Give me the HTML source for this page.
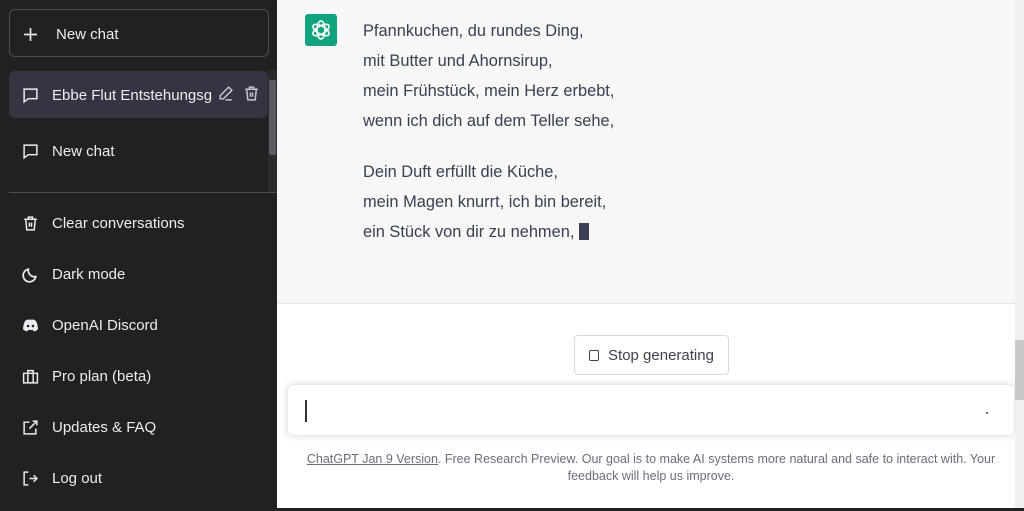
<!DOCTYPE html>
<html><head><meta charset="utf-8"><style>
*{box-sizing:border-box;margin:0;padding:0}
body{width:1024px;height:511px;overflow:hidden;font-family:"Liberation Sans",sans-serif;background:#fff;position:relative}
.side{position:absolute;left:0;top:0;width:277px;height:511px;background:#202123;color:#ececf1;font-size:15px}
.nc{position:absolute;left:9px;top:9px;width:260px;height:48px;border:1px solid #4d4d4f;border-radius:6px}
.row{position:absolute;left:22px;display:flex;align-items:center;gap:13px;height:24px}
.row svg{width:17px;height:17px;flex:none}
.sel{position:absolute;left:9px;top:71px;width:259px;height:47px;background:#343541;border-radius:6px}
.main{position:absolute;left:277px;top:0;width:738px;height:511px}
.gray{position:absolute;left:0;top:0;width:738px;height:304px;background:#f7f7f8;border-bottom:1px solid #e5e5e5}
.poem{position:absolute;left:86px;top:16px;color:#374151;font-size:16.4px;line-height:30px}
.logo{position:absolute;left:28px;top:14px;width:32px;height:32px;background:#10a37f;border-radius:3px}
.stop{position:absolute;left:297px;top:335px;width:155px;height:40px;border:1px solid #d9d9e3;border-radius:4px;background:#fff;font-size:15px;color:#40414f;display:flex;align-items:center;justify-content:center;gap:9px}
.inp{position:absolute;left:10px;top:384px;width:728px;height:52px;background:#fff;border-radius:6px;box-shadow:0 0 8px rgba(0,0,0,.12);border:1px solid #e8e8e8}
.foot{position:absolute;left:20px;top:451px;width:708px;text-align:center;font-size:12.5px;color:#6b6c7b;line-height:17px}
</style></head><body>
<div class="side">
 <div class="nc"></div>
 <div class="row" style="top:22px"><svg viewBox="0 0 16 16" stroke="#ececf1" stroke-width="1.6" fill="none"><path d="M8 2v12M2 8h12"/></svg><span style="margin-left:4px">New chat</span></div>
 <div class="sel"></div>
 <div class="row" style="top:83px"><svg viewBox="0 0 16 16" stroke="#ececf1" stroke-width="1.4" fill="none"><path d="M2 2h12v9H6l-4 3z"/></svg><span>Ebbe Flut Entstehungsg</span></div>
 <svg style="position:absolute;left:217px;top:85px" width="17" height="17" viewBox="0 0 16 16" stroke="#c5c5d2" stroke-width="1.4" fill="none"><path d="M11 2l3 3-8 8H3v-3zM8 14h6"/></svg>
 <svg style="position:absolute;left:243px;top:85px" width="17" height="17" viewBox="0 0 16 16" stroke="#c5c5d2" stroke-width="1.4" fill="none"><path d="M2 4h12M6 4V2h4v2M3.5 4l1 10h7l1-10M7 7v4M9 7v4"/></svg>
 <div style="position:absolute;left:268px;top:70px;width:9px;height:122px;background:#2a2b2e"></div>
 <div style="position:absolute;left:269px;top:80px;width:7px;height:75px;background:#5a5b60;border-radius:2px"></div>
 <div class="row" style="top:139px"><svg viewBox="0 0 16 16" stroke="#ececf1" stroke-width="1.4" fill="none"><path d="M2 2h12v9H6l-4 3z"/></svg><span>New chat</span></div>
 <div style="position:absolute;left:9px;top:192px;width:268px;height:1px;background:#4d4d4f"></div>
 <div class="row" style="top:211px"><svg viewBox="0 0 16 16" stroke="#ececf1" stroke-width="1.4" fill="none"><path d="M2 4h12M6 4V2h4v2M3.5 4l1 10h7l1-10M7 7v4M9 7v4"/></svg><span>Clear conversations</span></div>
 <div class="row" style="top:262px"><svg viewBox="0 0 16 16" stroke="#ececf1" stroke-width="1.6" fill="none"><path d="M13 10A6 6 0 0 1 6 3a6 6 0 1 0 7 7z"/></svg><span>Dark mode</span></div>
 <div class="row" style="top:313px"><svg viewBox="0 0 16 16" fill="#ececf1"><path d="M3 3.5Q5.5 2 7 2.5h2Q10.5 2 13 3.5q2 3.5 2 8Q13 13.5 11 13.5l-1-1.5Q8 12.5 6 12l-1 1.5Q3 13.5 1 11.5q0-4.5 2-8z"/><circle cx="5.7" cy="8.5" r="1.2" fill="#202123"/><circle cx="10.3" cy="8.5" r="1.2" fill="#202123"/></svg><span>OpenAI Discord</span></div>
 <div class="row" style="top:364px"><svg viewBox="0 0 16 16" stroke="#ececf1" stroke-width="1.4" fill="none"><path d="M1.5 5h13v9h-13zM5.5 5V2.5h5V5M5.5 5v9M10.5 5v9"/></svg><span>Pro plan (beta)</span></div>
 <div class="row" style="top:415px"><svg viewBox="0 0 16 16" stroke="#ececf1" stroke-width="1.4" fill="none"><path d="M7 3H2v11h11V9M10 2h4v4M14 2L7 9"/></svg><span>Updates &amp; FAQ</span></div>
 <div class="row" style="top:466px"><svg viewBox="0 0 16 16" stroke="#ececf1" stroke-width="1.4" fill="none"><path d="M6 2H2v12h4M7 8h7M11 5l3 3-3 3"/></svg><span>Log out</span></div>
</div>
<div class="main">
 <div class="gray"></div>
 <div class="logo"><svg width="32" height="32" viewBox="0 0 32 32" fill="none" stroke="#fff" stroke-width="1.6"><g transform="translate(16 16)"><ellipse rx="4" ry="9" transform="rotate(0)"/><ellipse rx="4" ry="9" transform="rotate(60)"/><ellipse rx="4" ry="9" transform="rotate(120)"/></g></svg></div>
 <div class="poem">Pfannkuchen, du rundes Ding,<br>mit Butter und Ahornsirup,<br>mein Frühstück, mein Herz erbebt,<br>wenn ich dich auf dem Teller sehe,
 <div style="height:21px"></div>Dein Duft erfüllt die Küche,<br>mein Magen knurrt, ich bin bereit,<br>ein Stück von dir zu nehmen, <span style="display:inline-block;width:10px;height:17px;background:#374151;vertical-align:-3px"></span></div>
 <div class="stop"><span style="width:10px;height:11px;border:1px solid #40414f;border-radius:2px"></span>Stop generating</div>
 <div class="inp"><div style="position:absolute;left:17px;top:15px;width:2px;height:22px;background:#333"></div><div style="position:absolute;right:26px;top:27px;width:2px;height:2px;background:#777"></div></div>
 <div class="foot"><u>ChatGPT Jan 9 Version</u>. Free Research Preview. Our goal is to make AI systems more natural and safe to interact with. Your feedback will help us improve.</div>
</div>
<div style="position:absolute;left:1015px;top:0;width:9px;height:511px;background:#f0f0f0"></div>
<div style="position:absolute;left:1015px;top:340px;width:9px;height:60px;background:#c8c8c8"></div>
<div style="position:absolute;left:0;top:508px;width:1024px;height:3px;background:#202123"></div>
</body></html>
